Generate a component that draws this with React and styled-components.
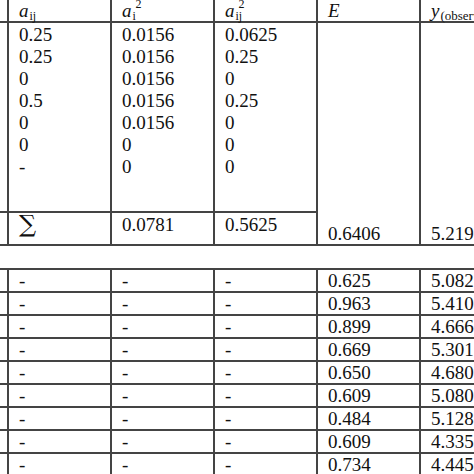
import React from 'react'
import styled, { createGlobalStyle } from 'styled-components'

const topRows = [
  ['0.25', '0.0156', '0.0625'],
  ['0.25', '0.0156', '0.25'],
  ['0', '0.0156', '0'],
  ['0.5', '0.0156', '0.25'],
  ['0', '0.0156', '0'],
  ['0', '0', '0'],
  ['-', '0', '0'],
]

const bottomRows = [
  ['0.625', '5.082'],
  ['0.963', '5.410'],
  ['0.899', '4.666'],
  ['0.669', '5.301'],
  ['0.650', '4.680'],
  ['0.609', '5.080'],
  ['0.484', '5.128'],
  ['0.609', '4.335'],
  ['0.734', '4.445'],
]

const App = () => {
  return (
    <Page>
      <GlobalStyle />
      <Table>
        <Cols />
        <thead>
          <tr>
            <HeadCell $first />
            <HeadCell>
              <HeadLabel>
                <Var>a</Var>
                <Sub>ij</Sub>
              </HeadLabel>
            </HeadCell>
            <HeadCell>
              <HeadLabel>
                <Var>a</Var>
                <Stack>
                  <Sup>2</Sup>
                  <Low>i</Low>
                </Stack>
              </HeadLabel>
            </HeadCell>
            <HeadCell>
              <HeadLabel>
                <Var>a</Var>
                <Stack>
                  <Sup>2</Sup>
                  <Low>ij</Low>
                </Stack>
              </HeadLabel>
            </HeadCell>
            <HeadCell>
              <HeadLabel>
                <Var>E</Var>
              </HeadLabel>
            </HeadCell>
            <HeadCell>
              <HeadLabel>
                <Var>y</Var>
                <Sub $small>(observed)</Sub>
              </HeadLabel>
            </HeadCell>
          </tr>
        </thead>
        <tbody>
          {topRows.map((row, i) => (
            <BodyRow key={i} $tall={i === topRows.length - 1}>
              <Cell $first />
              {row.map((value, j) => (
                <Cell key={j}>{value}</Cell>
              ))}
              {i === 0 && (
                <>
                  <Cell rowSpan={8} $align="bottom" $bottom>0.6406</Cell>
                  <Cell rowSpan={8} $align="bottom" $bottom>5.219</Cell>
                </>
              )}
            </BodyRow>
          ))}
          <SumRow>
            <Cell $first $top $bottom />
            <Cell $top $bottom>
              <Sigma>∑</Sigma>
            </Cell>
            <Cell $top $bottom>0.0781</Cell>
            <Cell $top $bottom>0.5625</Cell>
          </SumRow>
        </tbody>
      </Table>

      <Table $gap>
        <Cols />
        <tbody>
          {bottomRows.map(([e, y], i) => (
            <GridRow key={i}>
              <GridCell $first />
              <GridCell>-</GridCell>
              <GridCell>-</GridCell>
              <GridCell>-</GridCell>
              <GridCell>{e}</GridCell>
              <GridCell>{y}</GridCell>
            </GridRow>
          ))}
        </tbody>
      </Table>
    </Page>
  )
}

const Cols = () => (
  <colgroup>
    <Col $w={8} />
    <Col $w={103} />
    <Col $w={103} />
    <Col $w={103} />
    <Col $w={103} />
    <Col $w={140} />
  </colgroup>
)

export default App

const GlobalStyle = createGlobalStyle`
body {
  margin: 0;
  background: #fff;
  overflow: hidden;
}
`

const line = '2px solid #444'

const Page = styled.div`
width: 474px;
height: 474px;
overflow: hidden;
background: #fff;
color: #111;
font-family: "Liberation Serif", "Times New Roman", serif;
font-size: 19px;
`

const Table = styled.table`
border-collapse: collapse;
table-layout: fixed;
width: 560px;
margin-top: ${(p) => (p.$gap ? '22px' : '0')};
`

const Col = styled.col`
width: ${(p) => p.$w}px;
`

const Cell = styled.td`
border-left: ${(p) => (p.$first ? 'none' : line)};
border-right: ${line};
border-top: ${(p) => (p.$top ? line : 'none')};
border-bottom: ${(p) => (p.$bottom ? line : 'none')};
padding: ${(p) => (p.$first ? '0' : p.$align === 'bottom' ? '0 0 0 10px' : '1px 0 0 10px')};
vertical-align: ${(p) => p.$align || 'top'};
line-height: 21px;
white-space: nowrap;
overflow: hidden;
`

const HeadCell = styled.th`
height: 21px;
border-left: ${(p) => (p.$first ? 'none' : line)};
border-right: ${line};
border-bottom: ${line};
padding: 0;
vertical-align: bottom;
text-align: left;
font-weight: normal;
white-space: nowrap;
`

const HeadLabel = styled.div`
display: flex;
align-items: flex-end;
box-sizing: border-box;
height: 21px;
padding: 0 0 2px 10px;
`

const Var = styled.i`
font-style: italic;
line-height: 16px;
`

const Sub = styled.span`
font-size: ${(p) => (p.$small ? '13px' : '12px')};
line-height: 12px;
margin: 0 0 -3px 1px;
`

const Stack = styled.span`
display: flex;
flex-direction: column;
font-size: 12px;
margin: 0 0 -3px 1px;
`

const Sup = styled.span`
line-height: 11px;
margin-left: 3px;
`

const Low = styled.span`
line-height: 12px;
`

const BodyRow = styled.tr`
height: ${(p) => (p.$tall ? '57px' : '22px')};
`

const SumRow = styled.tr`
height: 33px;
`

const GridRow = styled.tr`
height: 23px;
`

const GridCell = styled.td`
border: ${line};
border-left: ${(p) => (p.$first ? 'none' : line)};
padding: ${(p) => (p.$first ? '0' : '0 0 0 10px')};
line-height: 21px;
vertical-align: middle;
white-space: nowrap;
overflow: hidden;
`

const Sigma = styled.span`
font-family: "DejaVu Serif", "Liberation Serif", serif;
font-size: 24px;
`
